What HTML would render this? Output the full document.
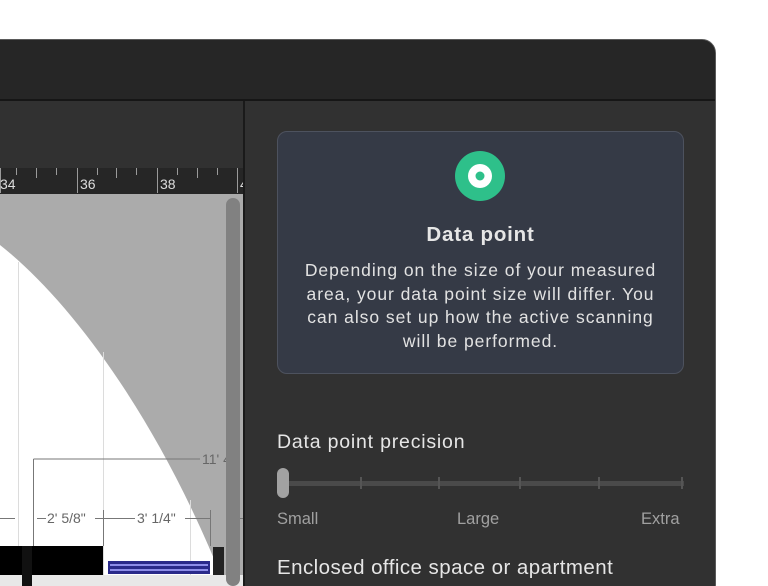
<!DOCTYPE html>
<html><head><style>
*{margin:0;padding:0;box-sizing:border-box}
html,body{width:768px;height:586px;overflow:hidden}
body{background:#fff;position:relative;font-family:"Liberation Sans",Arial,sans-serif}
.win{position:absolute;left:-20px;top:39px;width:736px;height:560px;background:#313131;border-radius:14px;border:1px solid #5a5a5a;overflow:hidden}
.title{position:absolute;left:0;top:0;width:100%;height:61px;background:#262626;border-bottom:2px solid #161616}
.abs{position:absolute}
</style></head><body>
<div class="win">
<div class="title"></div>
</div>
<div class="abs" style="left:243px;top:101px;width:2px;height:485px;background:#1a1a1a"></div>
<svg class="abs" style="left:0;top:168px" width="243" height="26">
<rect width="243" height="26" fill="#262626"/>
<g stroke="#9a9a9a" stroke-width="1">
<path d="M0.5 0V25M77.5 0V25M157.5 0V25M237.5 0V25"/>
<path d="M16.5 0V7M36.5 0V10M56.5 0V7M97.5 0V7M116.5 0V10M136.5 0V7M177.5 0V7M197.5 0V10M217.5 0V7"/>
</g>
<g fill="#dcdcdc" font-size="14" font-family="Liberation Sans,sans-serif"><text x="0" y="21">34</text><text x="80" y="21">36</text><text x="160" y="21">38</text><text x="240" y="21">4</text></g>
</svg>
<svg class="abs" style="left:0;top:194px" width="243" height="392" viewBox="0 194 243 392">
<rect x="0" y="194" width="243" height="392" fill="#ababab"/>
<path d="M0 245 C70 300 160 420 225 586 L0 586Z" fill="#fff"/>
<g stroke="#dcdcdc" stroke-width="1"><path d="M18.5 262V586M103.5 352V586M190.5 500V586"/></g>
<g stroke="#777" stroke-width="1" fill="none">
<path d="M33.5 459H200M33.5 459V586"/>
<path d="M0 518.5H15M37 518.5H46M95 518.5H135M185 518.5H210M227 518.5H243"/>
<path d="M103.5 510V546M210.5 510V546M226.5 510V546"/>
</g>
<g fill="#666" font-size="14" font-family="Liberation Sans,sans-serif"><text x="202" y="464">11' 4</text><text x="47" y="523">2' 5/8"</text><text x="137" y="523">3' 1/4"</text></g>
<rect x="0" y="575" width="243" height="11" fill="#e8e8e8"/>
<rect x="0" y="546" width="103" height="29" fill="#000"/>
<rect x="22" y="546" width="10" height="40" fill="#111"/>
<rect x="108" y="561" width="102" height="13" fill="#2a2a8a"/>
<rect x="110" y="564" width="98" height="2" fill="#8d8de8"/><rect x="110" y="569" width="98" height="2" fill="#8d8de8"/>
<rect x="213" y="547" width="11" height="28" fill="#222"/>
<rect x="226" y="198" width="14" height="388" rx="7" fill="#818181"/>
</svg>
<div class="abs" style="left:277px;top:131px;width:407px;height:243px;background:#353a46;border:1px solid #4d525e;border-radius:10px"></div>
<svg class="abs" style="left:455px;top:151px" width="50" height="50"><circle cx="25" cy="25" r="25" fill="#2ec08a"/><circle cx="25" cy="25" r="12" fill="#fff"/><circle cx="25" cy="25" r="4.5" fill="#2ec08a"/></svg>
<div class="abs" style="left:277px;top:223px;width:407px;text-align:center;color:#e6e6e6;font-size:20.5px;font-weight:bold;letter-spacing:0.8px">Data point</div>
<div class="abs" style="left:277px;top:259px;width:407px;text-align:center;color:#e2e2e2;font-size:17.5px;line-height:23.7px;white-space:nowrap;letter-spacing:0.95px">Depending on the size of your measured<br>area, your data point size will differ. You<br>can also set up how the active scanning<br>will be performed.</div>
<div class="abs" style="left:277px;top:431px;color:#e6e6e6;font-size:19.5px;letter-spacing:0.8px">Data point precision</div>
<svg class="abs" style="left:276px;top:466px" width="412" height="34">
<rect x="6" y="15" width="402" height="5" fill="#4a4a4a"/>
<g fill="#555"><rect x="84" y="11" width="2" height="12"/><rect x="162" y="11" width="2" height="12"/><rect x="243" y="11" width="2" height="12"/><rect x="322" y="11" width="2" height="12"/><rect x="405" y="11" width="2" height="12"/></g>
<rect x="1" y="2" width="12" height="30" rx="6" fill="#a2a2a2"/>
</svg>
<div class="abs" style="left:277px;top:510px;color:#a0a0a0;font-size:16.5px">Small</div>
<div class="abs" style="left:457px;top:510px;color:#a0a0a0;font-size:16.5px">Large</div>
<div class="abs" style="left:641px;top:510px;color:#a0a0a0;font-size:16.5px">Extra</div>
<div class="abs" style="left:277px;top:556px;color:#e6e6e6;font-size:20.5px;letter-spacing:0.45px">Enclosed office space or apartment</div>
</body></html>
